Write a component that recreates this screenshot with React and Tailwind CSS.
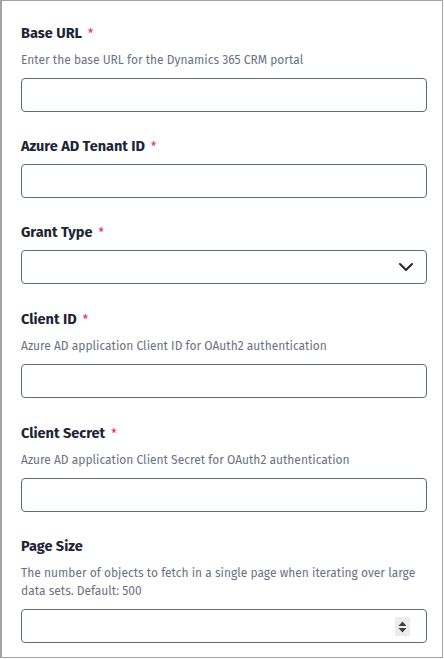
import React from "react";

function Label({ children, required }) {
  return (
    <div className="mt-[1px] h-[20px] text-[14.5px] leading-[20px] font-bold text-[#1d2433]">
      {children}
      {required && <span className="ml-[6px] text-[12px] leading-none text-[#e0245e] font-normal">*</span>}
    </div>
  );
}

function Desc({ children }) {
  return <div className="mt-[8px] text-[12px] leading-[18px] text-[#6b7280]">{children}</div>;
}

function Box({ children, afterDesc }) {
  return (
    <div className={"relative h-[34px] w-full rounded-[4px] border border-[#5f6b7a] bg-white " + (afterDesc ? "mt-[9px]" : "mt-[8px]")}>
      {children}
    </div>
  );
}

function Field({ label, required, desc, kind, late }) {
  return (
    <div className={"flex flex-col " + (late ? "mt-[1px]" : "")}>
      <Label required={required}>{label}</Label>
      {desc && <Desc>{desc}</Desc>}
      <Box afterDesc={!!desc}>
        {kind === "select" && (
          <svg className="absolute right-[12px] top-[11px]" width="16" height="10" viewBox="0 0 16 10">
            <path d="M2 2 L8 8 L14 2" fill="none" stroke="#1d2433" strokeWidth="2" strokeLinecap="round" strokeLinejoin="round" />
          </svg>
        )}
        {kind === "number" && (
          <div className="absolute right-[16px] top-[7px] flex h-[19px] w-[15px] flex-col items-center justify-center gap-[2px] bg-[#ececec]">
            <svg width="9" height="5" viewBox="0 0 9 5"><path d="M0.5 5 L4.5 0.5 L8.5 5 Z" fill="#3f3f3f" /></svg>
            <svg width="9" height="5" viewBox="0 0 9 5"><path d="M0.5 0 L4.5 4.5 L8.5 0 Z" fill="#3f3f3f" /></svg>
          </div>
        )}
      </Box>
    </div>
  );
}

export default function App() {
  return (
    <div
      className="h-[659px] w-[444px] bg-white"
      style={{ fontFamily: '"Fira Sans", "Source Sans Pro", Lato, "Noto Sans", sans-serif' }}
    >
      <div className="flex h-[658px] w-[443px] flex-col gap-[23px] border border-l-2 border-[#a3a3a3] pl-[19px] pr-[15px] pt-[21px]">
        <Field label="Base URL" required desc="Enter the base URL for the Dynamics 365 CRM portal" />
        <Field label="Azure AD Tenant ID" required />
        <Field label="Grant Type" required kind="select" />
        <Field label="Client ID" required late desc="Azure AD application Client ID for OAuth2 authentication" />
        <Field label="Client Secret" required late desc="Azure AD application Client Secret for OAuth2 authentication" />
        <Field
          label="Page Size"
          desc="The number of objects to fetch in a single page when iterating over large data sets. Default: 500"
          kind="number"
        />
      </div>
    </div>
  );
}
